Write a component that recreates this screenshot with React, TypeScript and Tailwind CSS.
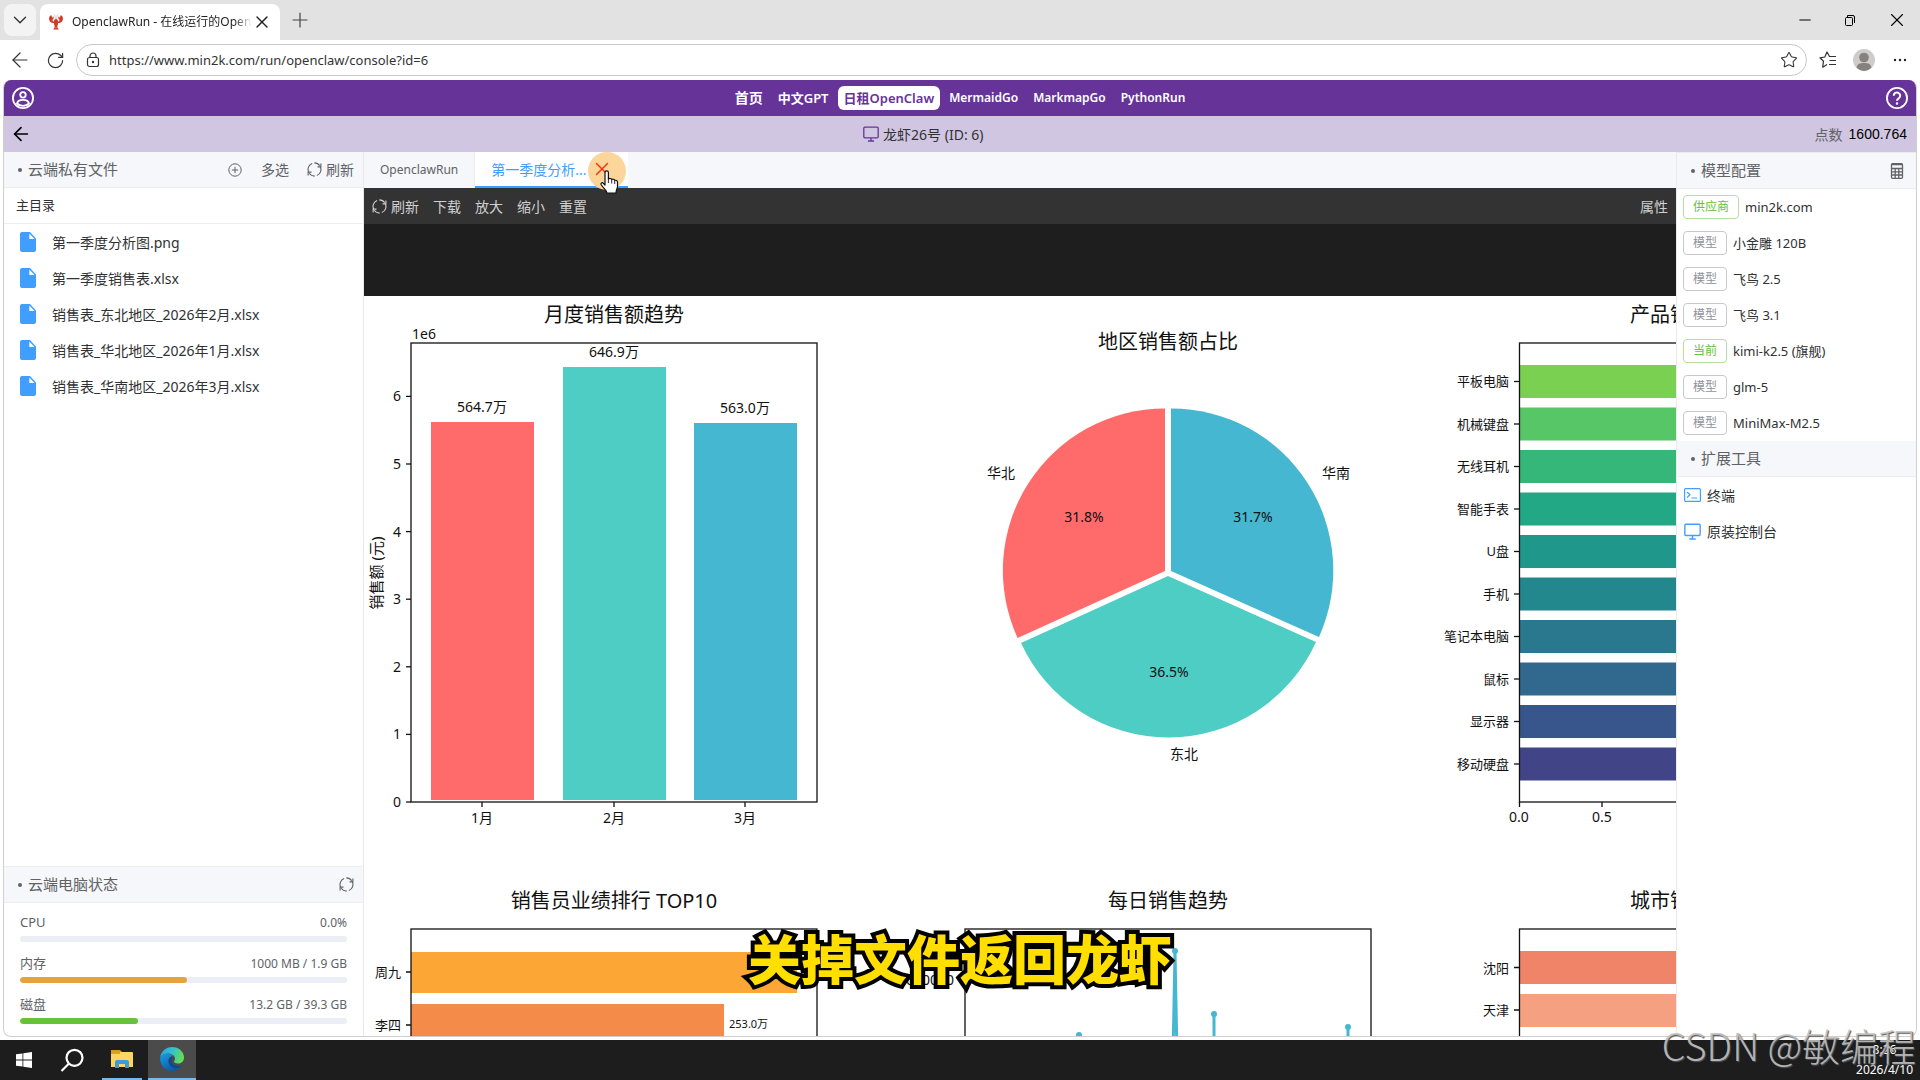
import React from "react";
import { ArrowLeft, ChevronDown, Minus, Plus, RotateCw, Star, X } from "lucide-react";

type IconProps = { className?: string };

const files = [
  "第一季度分析图.png",
  "第一季度销售表.xlsx",
  "销售表_东北地区_2026年2月.xlsx",
  "销售表_华北地区_2026年1月.xlsx",
  "销售表_华南地区_2026年3月.xlsx",
];

const navLinks = [
  { name: "首页", style: "px-[6px] text-[14px]" },
  { name: "中文GPT", style: "px-[6px] text-[13px]" },
  { name: "日租OpenClaw", style: "rounded-md bg-white px-[6px] text-[13px] text-[#663399]" },
  { name: "MermaidGo", style: "px-[6px] text-[12px]" },
  { name: "MarkmapGo", style: "px-[6px] text-[12px]" },
  { name: "PythonRun", style: "px-[6px] text-[12px]" },
];

const models = [
  { tag: "供应商", name: "min2k.com", active: true },
  { tag: "模型", name: "小金雕 120B", active: false },
  { tag: "模型", name: "飞鸟 2.5", active: false },
  { tag: "模型", name: "飞鸟 3.1", active: false },
  { tag: "当前", name: "kimi-k2.5 (旗舰)", active: true },
  { tag: "模型", name: "glm-5", active: false },
  { tag: "模型", name: "MiniMax-M2.5", active: false },
];

const stats = [
  { label: "CPU", value: "0.0%", percent: 0, color: "bg-[#67c23a]" },
  { label: "内存", value: "1000 MB / 1.9 GB", percent: 51, color: "bg-[#e6a23c]" },
  { label: "磁盘", value: "13.2 GB / 39.3 GB", percent: 36, color: "bg-[#67c23a]" },
];

export default function App() {
  return (
    <div className="relative flex h-screen flex-col overflow-hidden bg-white font-['Noto_Sans','Noto_Sans_CJK_SC',sans-serif] text-[14px] text-[#303133]">
      <TabStrip />
      <AddressBar />
      <div className="mx-[3px] mb-[3px] flex min-h-0 flex-1 flex-col overflow-hidden rounded-lg border border-t-0 border-[#cfcfcf]">
        <SiteNav />
        <MachineBar />
        <div className="flex min-h-0 flex-1">
          <FilePanel />
          <Viewer />
          <ModelPanel />
        </div>
      </div>
      <Taskbar />
      <p className="absolute inset-x-0 top-[917px] text-center font-['Noto_Sans_CJK_SC',sans-serif] text-[53px] leading-[80px] font-black text-[#ffde00] [-webkit-text-stroke:8px_black] [paint-order:stroke_fill]">
        关掉文件返回龙虾
      </p>
      <p className="absolute right-[4px] bottom-[11px] font-['Noto_Sans_CJK_SC',sans-serif] text-[38px] leading-[48px] font-light text-[#c4c4c4]/90 [text-shadow:1px_1px_1px_#555]">
        CSDN @敏编程
      </p>
    </div>
  );
}

const TabStrip = () => {
  return (
    <div className="flex h-10 shrink-0 items-end bg-[#e2e2e2] text-[12px]">
      <button aria-label="标签页" className="mb-1 ml-1 flex h-8 w-8 items-center justify-center rounded-lg bg-[#f3f3f3]">
        <ChevronDown className="h-[22px] w-[22px] text-[#333]" strokeWidth={1.5} />
      </button>
      <div className="ml-1 flex h-9 w-60 items-center rounded-t-lg bg-white px-2">
        <LobsterIcon className="mr-2 h-4 w-4 shrink-0" />
        <span className="w-[184px] overflow-hidden whitespace-nowrap text-[#222] [mask-image:linear-gradient(to_right,black_90%,transparent)]">
          OpenclawRun - 在线运行的OpenClaw
        </span>
        <button aria-label="关闭标签页">
          <X className="h-5 w-5 text-[#222]" strokeWidth={1.7} />
        </button>
      </div>
      <button aria-label="新建标签页" className="mb-2 ml-2">
        <Plus className="h-6 w-6 text-[#444]" strokeWidth={1.2} />
      </button>
      <div className="ml-auto flex h-10 items-center gap-[26px] pr-3 text-black">
        <button aria-label="最小化"><Minus className="h-[18px] w-[18px]" strokeWidth={1.4} /></button>
        <button aria-label="还原">
          <svg viewBox="0 0 16 16" className="mx-[2px] h-4 w-4" fill="none" stroke="currentColor">
            <rect x="3.5" y="5.5" width="7" height="8" rx="1" />
            <path d="M5.5 5V3.5H11a1.5 1.5 0 0 1 1.500 1.500V11" />
          </svg>
        </button>
        <button aria-label="关闭"><X className="h-[22px] w-[22px]" strokeWidth={1.2} /></button>
      </div>
    </div>
  );
};

const AddressBar = () => {
  return (
    <div className="flex h-10 shrink-0 items-center px-2 text-[#333]">
      <button aria-label="后退"><ArrowLeft className="h-6 w-6" strokeWidth={1.2} /></button>
      <button aria-label="重新加载" className="ml-[14px]"><RotateCw className="h-[19px] w-[19px]" strokeWidth={1.5} /></button>
      <div className="ml-[11px] flex h-8 flex-1 items-center rounded-full border border-[#c9c9c9] px-2">
        <svg viewBox="0 0 16 16" className="h-4 w-4 shrink-0" fill="none" stroke="currentColor" strokeWidth="1.2">
          <rect x="2.500" y="5.500" width="11" height="9" rx="2" />
          <path d="M5 5.500V4a3 3 0 0 1 6 0v1.500" />
          <circle cx="8" cy="10" r=".6" fill="currentColor" />
        </svg>
        <input
          aria-label="网址"
          readOnly
          value="https://www.min2k.com/run/openclaw/console?id=6"
          className="mx-2 flex-1 bg-transparent pt-px text-[13px] outline-none"
        />
        <button aria-label="收藏"><Star className="h-[18px] w-[18px]" strokeWidth={1.400} /></button>
      </div>
      <button aria-label="收藏夹" className="ml-3">
        <svg viewBox="0 0 18 18" className="h-[18px] w-[18px]" fill="none" stroke="currentColor" strokeWidth="1.200" strokeLinejoin="round">
          <path d="M17 5.500h-6.500L8 1 5.800 6 1 6.800l3.500 3.400-.8 6L8 13.500M10.500 9.500H17M10 13.500h7" />
        </svg>
      </button>
      <button aria-label="个人资料" className="ml-4">
        <svg viewBox="0 0 22 22" className="h-[22px] w-[22px]">
          <circle cx="11" cy="11" r="11" fill="#cfccc9" />
          <circle cx="11" cy="8.500" r="4.800" fill="#85827f" />
          <path d="M3.500 18.500c1-4 4-4.500 7.500-4.500s6.500.5 7.500 4.500A11 11 0 0 1 11 22a11 11 0 0 1-7.500-3.500Z" fill="#85827f" />
        </svg>
      </button>
      <button aria-label="更多" className="mr-[5px] ml-[18px]">
        <svg viewBox="0 0 14 14" className="h-[14px] w-[14px]" fill="#222">
          <circle cx="2" cy="7" r="1.200" />
          <circle cx="7" cy="7" r="1.200" />
          <circle cx="12" cy="7" r="1.200" />
        </svg>
      </button>
    </div>
  );
};

const SiteNav = () => {
  return (
    <nav className="flex h-9 shrink-0 items-center justify-between bg-[#663399] px-2 font-semibold text-white">
      <a href="#user" aria-label="用户">
        <svg viewBox="0 0 24 24" className="h-[22px] w-[22px]" fill="none" stroke="currentColor" strokeWidth="2">
          <circle cx="12" cy="12" r="11" />
          <circle cx="12" cy="8.500" r="3" />
          <path d="M5.500 18c.5-3 3-4 6.500-4s6 1 6.500 4c-2 2-4 2.500-6.500 2.500S7.500 20 5.500 18Z" />
        </svg>
      </a>
      <div className="flex items-center gap-[3px]">
        {navLinks.map((link) => (
          <a key={link.name} href={`/${link.name}`} className={`leading-6 ${link.style}`}>
            {link.name}
          </a>
        ))}
      </div>
      <a href="#help" aria-label="帮助">
        <svg viewBox="0 0 24 24" className="h-[22px] w-[22px]" fill="none" stroke="currentColor" strokeWidth="2">
          <circle cx="12" cy="12" r="11" />
          <path d="M8.500 9.500a3.500 3.500 0 1 1 5.500 2.800c-1.300.9-2 1.400-2 2.700" strokeWidth="2.200" />
          <circle cx="12" cy="18" r=".6" fill="currentColor" strokeWidth="1.400" />
        </svg>
      </a>
    </nav>
  );
};

const MachineBar = () => {
  return (
    <div className="flex h-9 shrink-0 items-center justify-between bg-[#d0c6e1] px-[6px]">
      <button aria-label="返回" className="text-black">
        <ArrowLeft className="h-[22px] w-[22px]" strokeWidth={1.8} />
      </button>
      <div className="flex items-center gap-1">
        <MonitorIcon className="h-4 w-4 text-[#663399]" />
        <span>龙虾26号 (ID: 6)</span>
      </div>
      <div className="flex items-center gap-[6px] pr-[3px]">
        <span className="text-[#606266]">点数</span>
        <span className="font-['Liberation_Sans',sans-serif] text-black">1600.764</span>
      </div>
    </div>
  );
};

const PanelHeader = ({ title, children }: { title: string; children?: React.ReactNode }) => {
  return (
    <div className="flex h-9 shrink-0 items-center border-b border-[#ebeef0] bg-[#f5f7fa] pr-[9px] pl-[13px] text-[#606266]">
      <span className="mr-[6px] ml-[1px] h-1 w-1 rounded-full bg-[#606266]" />
      <h2 className="text-[15px]">{title}</h2>
      <div className="ml-auto flex items-center">{children}</div>
    </div>
  );
};

const FilePanel = () => {
  return (
    <aside className="flex w-[360px] shrink-0 flex-col border-r border-[#e8e8ea]">
      <PanelHeader title="云端私有文件">
        <button aria-label="新建" className="mr-[19px]">
          <svg viewBox="0 0 14 14" className="h-[14px] w-[14px]" fill="none" stroke="currentColor">
            <circle cx="7" cy="7" r="6.200" />
            <path d="M7 3.800v6.400M3.800 7h6.400" />
          </svg>
        </button>
        <button className="mr-[18px]">多选</button>
        <button className="flex items-center gap-1">
          <RefreshIcon className="h-[15px] w-[15px]" />
          刷新
        </button>
      </PanelHeader>
      <div className="flex h-9 shrink-0 items-center border-b border-[#ebeef0] px-3 text-[13px]">主目录</div>
      <ul className="flex-1">
        {files.map((file) => (
          <li key={file} className="flex h-9 items-center gap-4 px-4">
            <svg viewBox="0 0 16 20" className="h-5 w-4" fill="#409eff">
              <path d="M2 0h8l6 6.500V18a2 2 0 0 1-2 2H2a2 2 0 0 1-2-2V2a2 2 0 0 1 2-2Z" />
              <path d="M9.300 1.500v5.500h5.200z" fill="#fff" />
            </svg>
            <a href={`#${file}`}>{file}</a>
          </li>
        ))}
      </ul>
      <div className="border-t border-[#ebeef0]">
        <PanelHeader title="云端电脑状态">
          <button aria-label="刷新状态"><RefreshIcon className="h-[15px] w-[15px]" /></button>
        </PanelHeader>
      </div>
      <div className="flex flex-col gap-[11px] px-4 pt-[9px] pb-3 text-[#606266]">
        {stats.map((stat) => (
          <div key={stat.label}>
            <div className="mb-[2px] flex h-[22px] items-center justify-between">
              <span className="text-[13px]">{stat.label}</span>
              <span className="text-[12px]">{stat.value}</span>
            </div>
            <div className="h-[6px] overflow-hidden rounded-full bg-[#ebeef5]">
              <div className={`h-full rounded-full ${stat.color}`} style={{ width: `${stat.percent}%` }} />
            </div>
          </div>
        ))}
      </div>
    </aside>
  );
};

const Viewer = () => {
  return (
    <main className="flex min-w-0 flex-1 flex-col">
      <div className="flex h-9 shrink-0 bg-[#f5f7fa]">
        <button className="border-r border-[#ebeef0] px-4 text-[12px] text-[#606266]">OpenclawRun</button>
        <div className="relative flex items-center border-b-2 border-[#409eff] bg-white pr-[15px] pl-4 text-[#409eff]">
          <button>第一季度分析...</button>
          <span className="absolute top-0 right-[2px] h-[38px] w-[38px] rounded-full bg-[#fbd59a]" />
          <button aria-label="关闭文件" className="relative ml-1 text-[#f5360f]">
            <X className="h-[22px] w-[22px]" strokeWidth={1.6} />
          </button>
          <HandIcon className="absolute top-[18px] right-[9px] z-10 h-6 w-5" />
        </div>
      </div>
      <div className="flex h-9 shrink-0 items-center gap-[14px] bg-[#333] px-2 text-[#d0d0d0]">
        <button className="flex items-center gap-1">
          <RefreshIcon className="h-[15px] w-[15px]" />
          刷新
        </button>
        <button>下载</button>
        <button>放大</button>
        <button>缩小</button>
        <button>重置</button>
        <button className="ml-auto">属性</button>
      </div>
      <div className="min-h-0 flex-1 overflow-hidden bg-[#1e1e1e] pt-[72px]">
        <Charts />
      </div>
    </main>
  );
};

const monthly = [
  { x: 67, top: 125, label: "564.7万", month: "1月", fill: "#ff6b6b" },
  { x: 199, top: 70, label: "646.9万", month: "2月", fill: "#4ecdc4" },
  { x: 330, top: 126, label: "563.0万", month: "3月", fill: "#45b7d1" },
];

const products = [
  { name: "平板电脑", fill: "#7ad151" },
  { name: "机械键盘", fill: "#56c667" },
  { name: "无线耳机", fill: "#35b779" },
  { name: "智能手表", fill: "#22a884" },
  { name: "U盘", fill: "#1f988b" },
  { name: "手机", fill: "#23888e" },
  { name: "笔记本电脑", fill: "#2a788e" },
  { name: "鼠标", fill: "#31688e" },
  { name: "显示器", fill: "#39568c" },
  { name: "移动硬盘", fill: "#414487" },
];

// One wide figure, cropped by the viewer just like a zoomed bitmap.
const Charts = () => {
  return (
    <svg width="1800" height="1200" className="max-w-none bg-white" fontSize="14" fill="#111">
      <g fontSize="20" textAnchor="middle">
        <text x="250" y="26">月度销售额趋势</text>
        <text x="804" y="53">地区销售额占比</text>
        <text x="250" y="612">销售员业绩排行 TOP10</text>
        <text x="804" y="612">每日销售趋势</text>
        <text x="1266" y="26" textAnchor="start">产品销售额</text>
        <text x="1266" y="612" textAnchor="start">城市销售额</text>
      </g>

      {/* monthly bars */}
      <text x="48" y="43">1e6</text>
      <text transform="translate(18 277) rotate(-90)" fontSize="15" textAnchor="middle">销售额 (元)</text>
      {[0, 1, 2, 3, 4, 5, 6].map((n) => (
        <g key={n}>
          <path d={`M42 ${506 - n * 67.6}h5`} stroke="#111" strokeWidth="1.300" />
          <text x="37" y={511 - n * 67.6} textAnchor="end">{n}</text>
        </g>
      ))}
      {monthly.map((bar) => (
        <g key={bar.month} textAnchor="middle">
          <rect x={bar.x} y={bar.top + 1} width="103" height={503 - bar.top} fill={bar.fill} />
          <text x={bar.x + 51} y={bar.top - 9}>{bar.label}</text>
          <path d={`M${bar.x + 51} 506v5`} stroke="#111" strokeWidth="1.300" />
          <text x={bar.x + 51} y="527">{bar.month}</text>
        </g>
      ))}

      {/* pie */}
      <path d="M807 275V112.500A162 162 0 0 1 955 341Z" fill="#45b7d1" />
      <path d="M801 275V112.500A162 162 0 0 0 653.600 342Z" fill="#ff6b6b" />
      <path d="M804 280 952 346A162 162 0 0 1 657 347Z" fill="#4ecdc4" />
      <g textAnchor="middle">
        <text x="637" y="182">华北</text>
        <text x="972" y="182">华南</text>
        <text x="820" y="463">东北</text>
        <text x="720" y="226">31.8%</text>
        <text x="889" y="226">31.7%</text>
        <text x="805" y="381">36.5%</text>
      </g>

      {/* products */}
      {products.map((product, i) => (
        <g key={product.name}>
          <rect x="1155" y={69 + i * 42.5} width="500" height="33" fill={product.fill} />
          <path d={`M1150 ${85.5 + i * 42.5}h5`} stroke="#111" strokeWidth="1.300" />
          <text x="1145" y={90 + i * 42.5} fontSize="13" textAnchor="end">{product.name}</text>
        </g>
      ))}
      <path d="M1155.500 506v5M1238 506v5" stroke="#111" strokeWidth="1.300" />
      <text x="1155" y="526" textAnchor="middle">0.0</text>
      <text x="1238" y="526" textAnchor="middle">0.5</text>

      {/* sales people */}
      <rect x="47" y="656" width="386" height="41" fill="#fca636" />
      <rect x="47" y="708" width="313" height="41" fill="#f58b48" />
      <path d="M42 676h5M42 729h5" stroke="#111" strokeWidth="1.300" />
      <text x="37" y="681" fontSize="13" textAnchor="end">周九</text>
      <text x="37" y="734" fontSize="13" textAnchor="end">李四</text>
      <text x="365" y="732" fontSize="11">253.0万</text>

      {/* daily trend */}
      <text x="590" y="689" textAnchor="end">600000</text>
      <g stroke="#45b7d1" strokeWidth="3" fill="none">
        <path d="M809 760 811 656 813 760M850 760V717M715 760V738M984 760V731" />
      </g>
      <g fill="#45b7d1">
        <circle cx="811" cy="655" r="3" />
        <circle cx="850" cy="718" r="3" />
        <circle cx="715" cy="739" r="3" />
        <circle cx="984" cy="731" r="3" />
      </g>

      {/* cities */}
      <rect x="1155" y="655" width="500" height="33" fill="#ef8468" />
      <rect x="1155" y="698" width="500" height="33" fill="#f5a081" />
      <path d="M1150 671.500h5M1150 714h5" stroke="#111" strokeWidth="1.300" />
      <text x="1145" y="677" fontSize="13" textAnchor="end">沈阳</text>
      <text x="1145" y="719" fontSize="13" textAnchor="end">天津</text>

      <g fill="none" stroke="#111" strokeWidth="1.300">
        <rect x="47" y="47" width="406" height="459" />
        <rect x="1155.500" y="47" width="600" height="459" />
        <rect x="47" y="633" width="406" height="459" />
        <rect x="601" y="633" width="406" height="459" />
        <rect x="1155.500" y="633" width="600" height="459" />
      </g>
    </svg>
  );
};

const ModelPanel = () => {
  return (
    <aside className="w-60 shrink-0 border-t border-l border-[#ebebed]">
      <PanelHeader title="模型配置">
        <button aria-label="计算器">
          <svg viewBox="0 0 16 16" className="mr-[2px] h-4 w-4" fill="none" stroke="currentColor" strokeWidth="1.300">
            <rect x="2.500" y=".7" width="11" height="14.600" rx="1" />
            <path d="M2.500 5.500h11M2.500 8.800h11M2.500 12h11M6.200 5.500v9.500M9.800 5.500v9.500" />
            <path d="M3 1.500h10" />
          </svg>
        </button>
      </PanelHeader>
      <ul>
        {models.map((model) => (
          <li key={model.name} className="flex h-9 items-center gap-[6px] px-[6px]">
            <span
              className={
                model.active
                  ? "rounded border border-[#b3e19d] px-[9px] text-[12px] leading-[22px] text-[#67c23a]"
                  : "rounded border border-[#c8c9cc] px-[9px] text-[12px] leading-[22px] text-[#909399]"
              }
            >
              {model.tag}
            </span>
            <span className="pt-px text-[13px]">{model.name}</span>
          </li>
        ))}
      </ul>
      <PanelHeader title="扩展工具" />
      <a href="#terminal" className="flex h-9 items-center gap-[6px] px-[7px]">
        <svg viewBox="0 0 17 14" className="h-[14px] w-[17px] text-[#409eff]" fill="none" stroke="currentColor" strokeWidth="1.200">
          <rect x=".6" y=".6" width="15.800" height="12.800" rx="1" />
          <path d="m3 4 3 2.800L3 9.500M7.500 10H13" />
        </svg>
        终端
      </a>
      <a href="#console" className="flex h-9 items-center gap-[6px] px-[7px]">
        <MonitorIcon className="h-[17px] w-[17px] text-[#409eff]" />
        原装控制台
      </a>
    </aside>
  );
};

const Taskbar = () => {
  return (
    <footer className="flex h-10 shrink-0 items-stretch bg-[#1d1d1d] text-white">
      <button aria-label="开始" className="flex w-12 items-center justify-center">
        <svg viewBox="0 0 16 16" className="h-4 w-4" fill="#fff">
          <path d="M0 2.300 6.500 1.400v6.200H0zM7.300 1.300 16 0v7.600H7.300zM0 8.400h6.500v6.200L0 13.700zM7.300 8.400H16V16l-8.700-1.300z" />
        </svg>
      </button>
      <button aria-label="搜索" className="flex w-12 items-center justify-center">
        <svg viewBox="0 0 24 24" className="h-6 w-6" fill="none" stroke="#fff" strokeWidth="2.200">
          <circle cx="14.500" cy="9.800" r="8" />
          <path d="M9 15.500 1.500 23" />
        </svg>
      </button>
      <button aria-label="文件资源管理器" className="mx-[6px] flex w-10 items-center justify-center border-b-2 border-[#76b9ed]">
        <svg viewBox="0 0 22 20" className="h-5 w-[22px]">
          <path d="M0 1h9l2 2h-11z" fill="#d69a1c" />
          <path d="M0 3h21a1 1 0 0 1 1 1v14H0z" fill="#fcd462" />
          <path d="M0 3h9v2H0z" fill="#e0a320" />
          <path d="M4 19v-6a2 2 0 0 1 2-2h10a2 2 0 0 1 2 2v6h-4v-4H8v4z" fill="#3f9bd8" />
        </svg>
      </button>
      <button aria-label="Edge" className="flex w-12 items-center justify-center border-b-2 border-[#76b9ed] bg-[#4b4b4b]">
        <EdgeIcon className="h-6 w-6" />
      </button>
      <div className="ml-auto flex flex-col items-center justify-center pr-[7px] text-[12px] leading-5">
        <span>8:26</span>
        <span>2026/4/10</span>
      </div>
    </footer>
  );
};

const RefreshIcon = ({ className }: IconProps) => (
  <svg viewBox="0 0 16 16" className={className} fill="none" stroke="currentColor" strokeWidth="1.200">
    <path d="M1.200 14.500v-3.700h3.600M1.800 11A7 7 0 0 1 5.500 1.500" />
    <path d="M14.800 1.500v3.700h-3.600M14.200 5A7 7 0 0 1 10.500 14.500M7.800 1a7 7 0 0 1 5.800 3M8.200 15a7 7 0 0 1-5.800-3" />
  </svg>
);

const MonitorIcon = ({ className }: IconProps) => (
  <svg viewBox="0 0 16 16" className={className} fill="none" stroke="currentColor" strokeWidth="1.300">
    <rect x=".8" y="1.200" width="14.400" height="10.600" rx="1" />
    <path d="M8 12v3M5 15h6" />
  </svg>
);

const LobsterIcon = ({ className }: IconProps) => (
  <svg viewBox="0 0 16 16" className={className} fill="#d03a27">
    <path d="M3.200 1C.8 2.500.3 5.500 2 7.500c1 1.100 2.500 1.500 4 1.700l.3-1.400C5 7.500 4.200 6.800 4.500 5.800c1.200-.8 1.500-2.300.8-3.600l-1 1.600Z" />
    <path d="M12.800 1c2.400 1.500 2.900 4.500 1.200 6.500-1 1.100-2.500 1.500-4 1.700l-.3-1.400c1.300-.3 2.100-1 1.800-2-1.200-.8-1.500-2.300-.8-3.600l1 1.600Z" />
    <path d="M8 5c1.500 0 2.300 1.700 2.100 3.800L9.300 13H6.700l-.8-4.200C5.700 6.700 6.500 5 8 5ZM6.500 13.300h3l1.200 2.200H5.300z" />
    <path d="M7.500 5.200 6.500.5M8.500 5.200l1-4.700" stroke="#c9a9a0" strokeWidth=".6" fill="none" />
  </svg>
);

const EdgeIcon = ({ className }: IconProps) => (
  <svg viewBox="0 0 24 24" className={className}>
    <defs>
      <linearGradient id="edge-top" x1="0" y1="0.300" x2="1" y2="0.500">
        <stop offset="0" stopColor="#2ba8e0" />
        <stop offset=".5" stopColor="#35c1c9" />
        <stop offset="1" stopColor="#67e04c" />
      </linearGradient>
      <linearGradient id="edge-left" x1="0" y1="0" x2=".6" y2="1">
        <stop offset="0" stopColor="#1b9de2" />
        <stop offset="1" stopColor="#0c59a4" />
      </linearGradient>
    </defs>
    <path d="M.2 10.500C1 4.500 6 0 12 0c7 0 12 5 12 10.500 0 4-3 6-6 6-2.500 0-4-1-4-2 0-.8 1-1 1-3 0-2.500-3-5-7-5-3.500 0-6 1.500-7.800 4Z" fill="url(#edge-top)" />
    <path d="M.2 10.500C2 7.500 5 6 8 6.500c3.500.5 5.500 2.500 5.500 2.500-3-.5-5 2-5 5 0 4.500 4.500 8.500 11.500 6C18 22.500 15 24 12 24 5 24-.5 18 .2 10.500Z" fill="url(#edge-left)" />
    <path d="M10.500 10c-3 2.500-2.500 8 2 10.500 2.500 1.200 6 1 9-1.500.5-.4.200-.8-.4-.6-5 1.800-9.600-.9-9.600-4.900 0-1.500.7-2.800 1.500-3.500Z" fill="#0b4a92" />
  </svg>
);

const HandIcon = ({ className }: IconProps) => (
  <svg viewBox="0 0 20 24" className={className} fill="#fff" stroke="#111" strokeWidth="1.200" strokeLinejoin="round">
    <path d="M6 15V2.500a1.700 1.700 0 0 1 3.400 0V9c1-1 3-.6 3.300.6 1-.8 2.700-.4 3 .9 1.200-.6 2.800 0 2.800 1.700v4.300c0 2-1.500 3.500-1.500 6.500H8c0-2.500-3.500-4.500-5.800-8.200-1-1.700 1-2.800 2.200-1.500Z" />
    <path d="M9.400 9v4M12.700 10v3.500M15.700 11v3" strokeWidth=".9" />
  </svg>
);
